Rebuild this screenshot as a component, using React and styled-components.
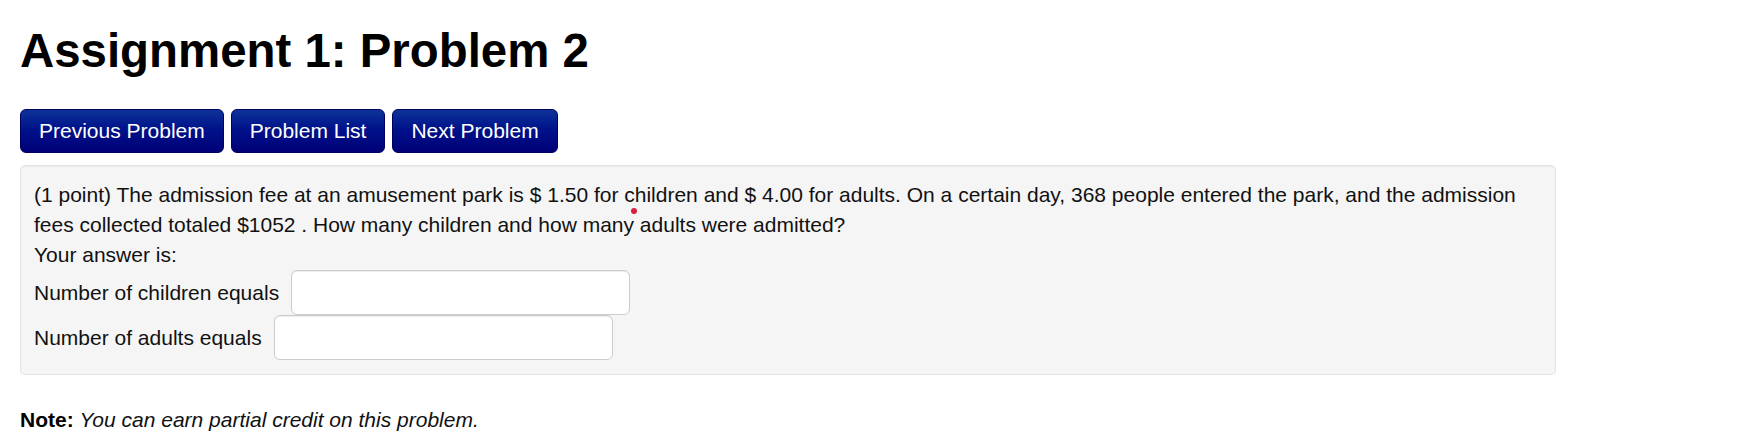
import React from "react";
import styled, { createGlobalStyle } from "styled-components";

const Global = createGlobalStyle`
  html, body { margin: 0; padding: 0; background: #ffffff; }
  body { font-family: "Liberation Sans", Arial, sans-serif; color: #111; }
`;

const Page = styled.div`
  padding: 21px 20px 0 20px;
`;

const Title = styled.h1`
  margin: 0 0 28px 0;
  font-size: 47.4px;
  line-height: 60px;
  font-weight: 700;
  color: #000;
`;

const Nav = styled.div`
  display: flex;
  gap: 7px;
`;

const NavButton = styled.button`
  font-family: "Liberation Sans", Arial, sans-serif;
  font-size: 21px;
  line-height: 30px;
  color: #fff;
  height: 44px;
  padding: 0 18px;
  border: 1px solid #00005f;
  border-radius: 6px;
  background: linear-gradient(to bottom, #0d3399 0%, #00128a 45%, #000078 100%);
  cursor: pointer;
`;

const Well = styled.div`
  position: relative;
  margin-top: 12px;
  width: 1536px;
  box-sizing: border-box;
  padding: 14px 13px 14px 13px;
  background: #f5f5f5;
  border: 1px solid #e3e3e3;
  border-radius: 5px;
  box-shadow: inset 0 1px 1px rgba(0, 0, 0, 0.05);
  font-size: 21px;
  line-height: 30px;
  color: #111;
`;

const Text = styled.div``;

const AnswerRow = styled.div`
  display: flex;
  align-items: center;
  height: 45px;
  gap: 12px;
`;

const AnswerInput = styled.input`
  width: 339px;
  height: 45px;
  box-sizing: border-box;
  background: #fff;
  border: 1px solid #cccccc;
  border-radius: 6px;
  box-shadow: inset 0 1px 1px rgba(0, 0, 0, 0.075);
  font-size: 21px;
  padding: 0 9px;
  font-family: "Liberation Sans", Arial, sans-serif;
`;

const Dot = styled.span`
  position: absolute;
  left: 610px;
  top: 42px;
  width: 6px;
  height: 6px;
  border-radius: 50%;
  background: #d8213a;
`;

const Note = styled.p`
  margin: 30px 0 0 0;
  font-size: 21px;
  line-height: 30px;
  color: #111;
  b { color: #000; }
  i { font-style: italic; }
`;

export default function App() {
  return (
    <>
      <Global />
      <Page>
        <Title>Assignment 1: Problem 2</Title>
        <Nav>
          <NavButton>Previous Problem</NavButton>
          <NavButton>Problem List</NavButton>
          <NavButton>Next Problem</NavButton>
        </Nav>
        <Well>
          <Dot />
          <Text>
            (1 point) The admission fee at an amusement park is $ 1.50 for children and $ 4.00 for adults. On a certain day, 368 people entered the park, and the admission fees collected totaled $1052 . How many children and how many adults were admitted?
          </Text>
          <Text>Your answer is:</Text>
          <AnswerRow>
            <span>Number of children equals</span>
            <AnswerInput type="text" />
          </AnswerRow>
          <AnswerRow>
            <span>Number of adults equals</span>
            <AnswerInput type="text" />
          </AnswerRow>
        </Well>
        <Note>
          <b>Note:</b> <i>You can earn partial credit on this problem.</i>
        </Note>
      </Page>
    </>
  );
}
